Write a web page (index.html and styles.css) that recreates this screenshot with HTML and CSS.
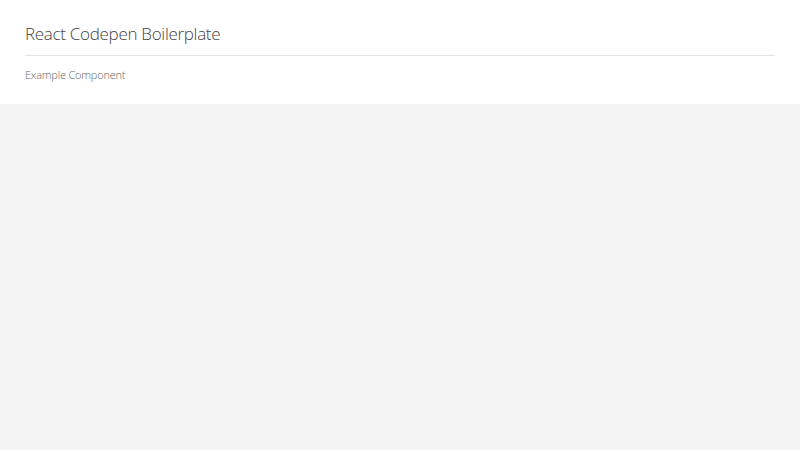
FILE: index.html
```html
<!DOCTYPE html>
<html>
<head>
<meta charset="utf-8">
<link rel="stylesheet" href="styles.css">
</head>
<body>
<div class="app">
  <header class="panel">
    <h1 class="title">React Codepen Boilerplate</h1>
    <p class="subtitle">Example Component</p>
  </header>
</div>
</body>
</html>
```
FILE: styles.css
```css
html, body {
  margin: 0;
  padding: 0;
  height: 100%;
  background: #f4f4f4;
  font-family: "Open Sans", "Segoe UI", sans-serif;
}
.panel {
  background: #ffffff;
  padding: 22px 25px 0;
  height: 82px;
}
.title {
  margin: 0;
  font-weight: 300;
  font-size: 17px;
  letter-spacing: -0.3px;
  line-height: 24px;
  color: #444444;
  padding-bottom: 9px;
  border-bottom: 1px solid #e3e3e3;
}
.subtitle {
  margin: 11px 0 0;
  font-weight: 300;
  font-size: 11px;
  letter-spacing: -0.2px;
  line-height: 16px;
  color: #666666;
}
```
